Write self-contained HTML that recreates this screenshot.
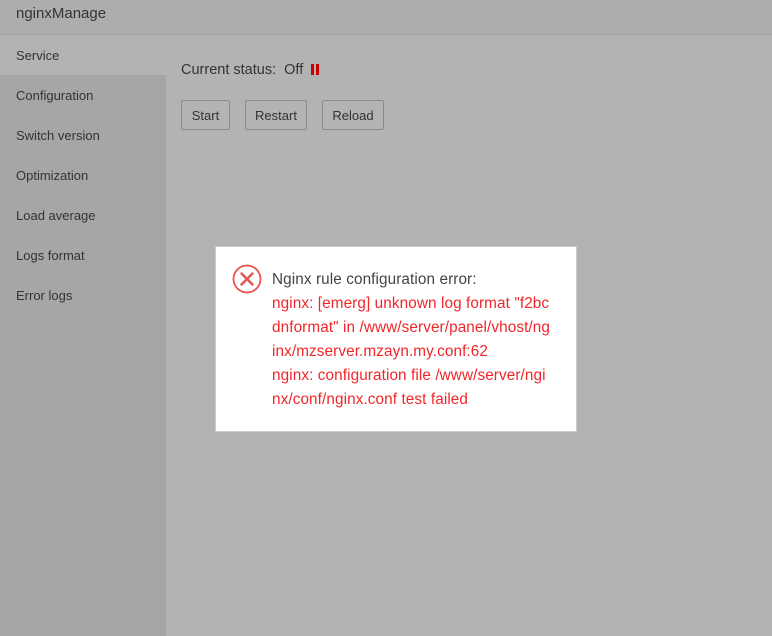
<!DOCTYPE html>
<html><head><style>
*{margin:0;padding:0;box-sizing:border-box}
body{width:772px;height:636px;overflow:hidden;background:#b3b3b3;font-family:"Liberation Sans",sans-serif;position:relative}
.hd{position:absolute;left:0;top:0;width:772px;height:35px;background:#adadad;border-bottom:1px solid #a3a3a3;color:#333;font-size:15px;line-height:28px;padding-left:16px}
.sb{position:absolute;left:0;top:35px;width:166px;height:601px;background:#a6a6a6}
.sb div{height:40px;line-height:42px;padding-left:16px;font-size:13px;color:#333}
.sb .on{background:#b3b3b3}
.st{position:absolute;left:181px;top:62px;font-size:14.5px;color:#333}
.st b{display:inline-block;width:3px;height:11px;background:#c00;margin-left:2px;vertical-align:-1px}
.btn{position:absolute;top:100px;height:30px;border:1px solid #8c8c8c;border-radius:2px;font-size:13px;color:#333;line-height:30px;text-align:center}
.dlg{position:absolute;left:215px;top:246px;width:362px;height:186px;background:#fff;border:1px solid #ccc}
.t{position:absolute;left:56px;top:21px;font-size:15.3px;line-height:24px;color:#c22;white-space:nowrap;letter-spacing:0.1px}
.t .h{color:#444}
.t .r{color:#f0262a}
</style></head><body>
<div class="hd">nginxManage</div>
<div class="sb">
<div class="on">Service</div><div>Configuration</div><div>Switch version</div><div>Optimization</div><div>Load average</div><div>Logs format</div><div>Error logs</div>
</div>
<div class="st">Current status:&nbsp; Off <b style="margin-left:4px"></b><b></b></div>
<div class="btn" style="left:181px;width:49px">Start</div>
<div class="btn" style="left:245px;width:62px">Restart</div>
<div class="btn" style="left:322px;width:62px">Reload</div>
<div class="dlg">
<svg style="position:absolute;left:16px;top:17px" width="30" height="30" viewBox="0 0 30 30"><circle cx="15" cy="15" r="13.5" fill="none" stroke="#e8534f" stroke-width="1.8"/><path d="M9.5 9.5L20.5 20.5M20.5 9.5L9.5 20.5" stroke="#e8534f" stroke-width="2.4" stroke-linecap="round"/></svg>
<div class="t"><div class="h">Nginx rule configuration error:</div>
<div class="r">nginx: [emerg] unknown log format "f2bc</div>
<div class="r">dnformat" in /www/server/panel/vhost/ng</div>
<div class="r">inx/mzserver.mzayn.my.conf:62</div>
<div class="r">nginx: configuration file /www/server/ngi</div>
<div class="r">nx/conf/nginx.conf test failed</div></div>
</div>
</body></html>
